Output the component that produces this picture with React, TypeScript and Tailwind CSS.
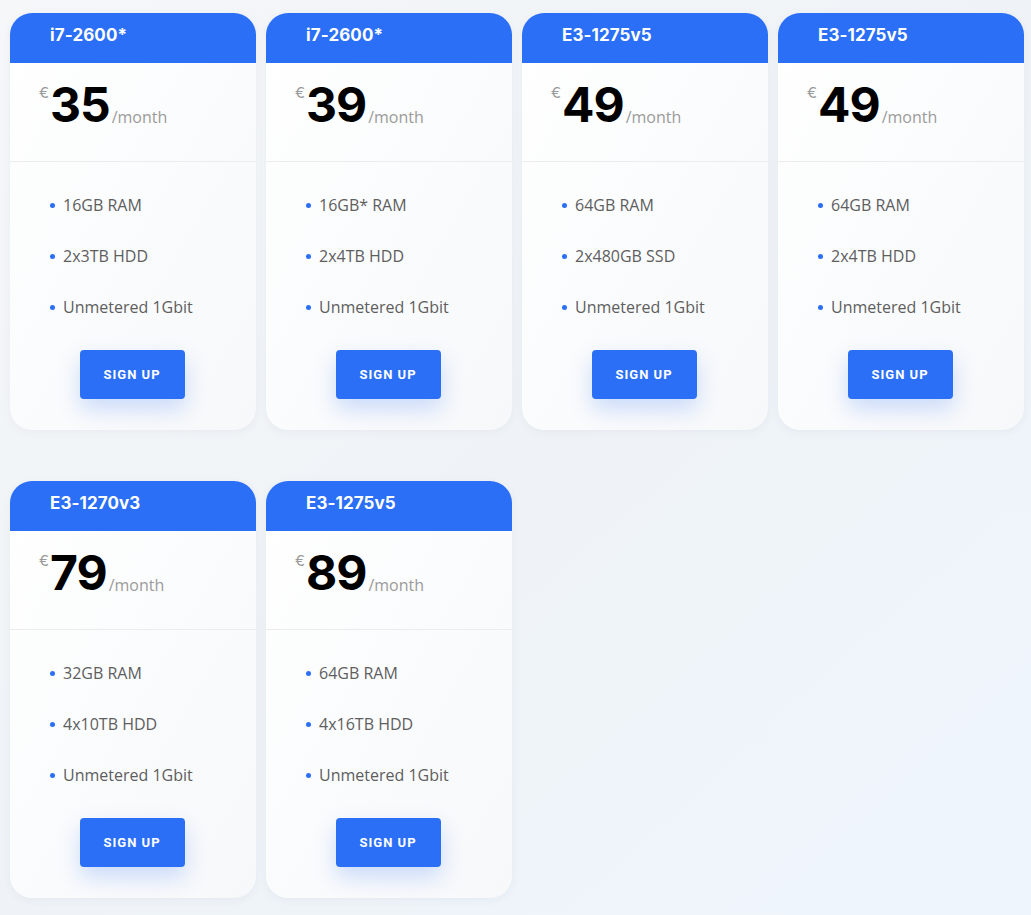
const plans = [
  { cpu: "i7-2600*", price: 35, features: ["16GB RAM", "2x3TB HDD", "Unmetered 1Gbit"] },
  { cpu: "i7-2600*", price: 39, features: ["16GB* RAM", "2x4TB HDD", "Unmetered 1Gbit"] },
  { cpu: "E3-1275v5", price: 49, features: ["64GB RAM", "2x480GB SSD", "Unmetered 1Gbit"] },
  { cpu: "E3-1275v5", price: 49, features: ["64GB RAM", "2x4TB HDD", "Unmetered 1Gbit"] },
  { cpu: "E3-1270v3", price: 79, features: ["32GB RAM", "4x10TB HDD", "Unmetered 1Gbit"] },
  { cpu: "E3-1275v5", price: 89, features: ["64GB RAM", "4x16TB HDD", "Unmetered 1Gbit"] },
];

type Plan = (typeof plans)[number];

const PlanCard = ({ cpu, price, features }: Plan) => (
  <div className="w-[246px] rounded-[22px] bg-gradient-to-br from-white to-[#f6f8fa] shadow-[0_2px_10px_rgba(30,60,100,0.05)] overflow-hidden">
    <div className="h-[50px] bg-[#2b6ff7] pl-[40px] pt-[10px] text-white font-['Inter',sans-serif] font-bold text-[17px] leading-[24px] tracking-[0.1px]">
      {cpu}
    </div>
    <div className="h-[99px] border-b border-[#ececec] pl-[29px] pt-[17px] flex items-start font-['Inter',sans-serif]">
      <span className="text-[15px] leading-none text-[#9a9a9a] mt-[5px]">€</span>
      <span className="text-[48px] leading-[50px] font-bold text-black tracking-[-1px] ml-[1px]">{price}</span>
      <span className="text-[16px] text-[#9b9b9b] font-['Open_Sans',sans-serif] mt-[25px] ml-[2px]">/month</span>
    </div>
    <ul className="pt-[33px] pl-[40px] flex flex-col gap-[31px] font-['Open_Sans',sans-serif]">
      {features.map((f, i) => (
        <li key={i} className="flex items-center gap-[8px] text-[16px] leading-[20px] text-[#5e5e5e]">
          <span className="w-[5px] h-[5px] rounded-full bg-[#2b6ff7]" />
          {f}
        </li>
      ))}
    </ul>
    <div className="flex justify-center pt-[33px] pb-[31px]">
      <button className="w-[105px] h-[49px] -ml-[2px] rounded-[4px] bg-[#2b6ff7] text-white text-[13px] font-bold tracking-[1px] font-['Roboto',sans-serif] shadow-[0_10px_22px_rgba(43,111,247,0.22)]">
        SIGN UP
      </button>
    </div>
  </div>
);

export default function App() {
  return (
    <div className="min-h-[915px] w-full bg-gradient-to-br from-[#f5f7f9] via-[#eff3f7] to-[#eef5fc] pl-[10px] pt-[13px]">
      <div className="grid grid-cols-[repeat(4,246px)] gap-x-[10px] gap-y-[51px]">
        {plans.map((p, i) => (
          <PlanCard key={i} {...p} />
        ))}
      </div>
    </div>
  );
}
